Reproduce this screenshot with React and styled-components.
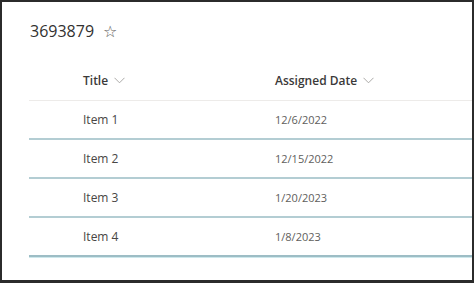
import React from 'react';
import styled, { createGlobalStyle } from 'styled-components';

const GlobalStyle = createGlobalStyle`
    html, body {
        margin: 0;
        padding: 0;
        background: #ffffff;
    }
    body {
        font-family: "Open Sans", "Noto Sans", sans-serif;
    }
`;

const rows = [
    { title: 'Item 1', date: '12/6/2022' },
    { title: 'Item 2', date: '12/15/2022' },
    { title: 'Item 3', date: '1/20/2023' },
    { title: 'Item 4', date: '1/8/2023' },
];

function Chevron() {
    return (
        <svg width="11" height="7" viewBox="0 0 11 7" fill="none">
            <path d="M0.5 0.8 L5.5 5.8 L10.5 0.8" stroke="#a19f9d" strokeWidth="0.9" />
        </svg>
    );
}

function App() {
    return (
        <>
            <GlobalStyle />
            <Frame>
                <Header>
                    <ListName>3693879</ListName>
                    <Star>☆</Star>
                </Header>
                <Table>
                    <HeadRow>
                        <HeadCell>
                            Title <Chevron />
                        </HeadCell>
                        <HeadCell>
                            Assigned Date <Chevron />
                        </HeadCell>
                    </HeadRow>
                    {rows.map((r, i) => (
                        <Row key={r.title} $last={i === rows.length - 1}>
                            <TitleCell>{r.title}</TitleCell>
                            <DateCell>{r.date}</DateCell>
                        </Row>
                    ))}
                </Table>
            </Frame>
        </>
    );
}

const Frame = styled.div`
    box-sizing: border-box;
    width: 474px;
    height: 283px;
    border-top: 2px solid #2b2b2b;
    border-left: 2px solid #2b2b2b;
    border-right: 2px solid #2b2b2b;
    border-bottom: 3px solid #2b2b2b;
    background: #ffffff;
    overflow: hidden;
`;

const Header = styled.div`
    display: flex;
    align-items: center;
    gap: 9px;
    height: 58px;
    padding-left: 28px;
`;

const ListName = styled.span`
    font-size: 16px;
    color: #323130;
`;

const Star = styled.span`
    font-family: "DejaVu Sans", sans-serif;
    font-size: 16px;
    color: #605e5c;
`;

const Table = styled.div`
    margin-left: 27px;
    display: flex;
    flex-direction: column;
`;

const HeadRow = styled.div`
    display: grid;
    grid-template-columns: 192px 1fr;
    height: 40px;
    align-items: center;
    border-bottom: 1px solid #edebe9;
`;

const HeadCell = styled.div`
    display: flex;
    align-items: center;
    gap: 6px;
    font-size: 12px;
    font-weight: 600;
    color: #3b3a39;
    padding-left: 54px;
    & + & {
        padding-left: 0;
        margin-left: 54px;
    }
`;

const Row = styled.div`
    display: grid;
    grid-template-columns: 192px 1fr;
    height: 37px;
    align-items: center;
    border-bottom: 2px solid ${(p) => (p.$last ? '#9dbdc5' : '#b3cdd3')};
    box-shadow: ${(p) => (p.$last ? '0 1px 0 #cde8ec' : 'none')};
`;

const TitleCell = styled.div`
    font-size: 12px;
    color: #484644;
    padding-left: 54px;
`;

const DateCell = styled.div`
    font-size: 11px;
    color: #605e5c;
    padding-left: 54px;
`;

export default App;
